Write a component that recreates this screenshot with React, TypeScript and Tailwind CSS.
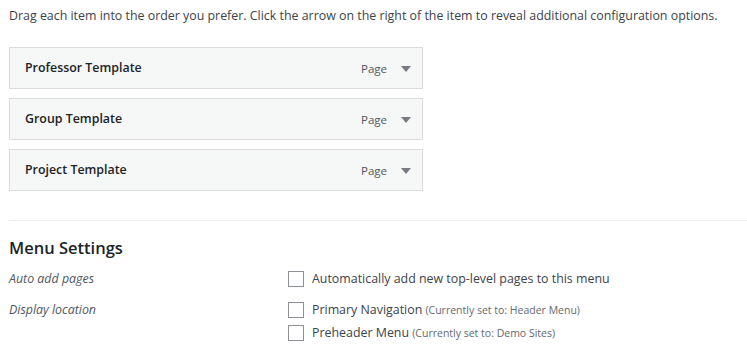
import React from "react";

const items = ["Professor Template", "Group Template", "Project Template"];

function Check() {
  return <span className="inline-block w-4 h-4 border border-[#8c8f94] bg-white shrink-0" />;
}

export default function App() {
  return (
    <div className="w-[747px] h-[349px] bg-white text-[#3c434a] text-[12.4px] font-['Segoe_UI','Open_Sans',sans-serif] overflow-hidden">
      <div className="pl-[9px]">
        <p className="pt-[6px] leading-[19px] whitespace-nowrap">Drag each item into the order you prefer. Click the arrow on the right of the item to reveal additional configuration options.</p>
        <div className="mt-[22px] flex flex-col gap-[9px] w-[414px]">
          {items.map((t) => (
            <div key={t} className="h-[42px] border border-[#dcdcde] bg-[#f6f7f7] flex items-center pl-[15px] pr-[11px] pt-[1px]">
              <span className="font-semibold text-[#1d2327] flex-1">{t}</span>
              <span className="text-[#50575e] text-[11.5px]">Page</span>
              <svg width="10" height="6" viewBox="0 0 10 6" className="ml-[14px]"><path d="M0 0h10L5 6z" fill="#787c82" /></svg>
            </div>
          ))}
        </div>
        <div className="mt-[29px] border-t border-[#f0f0f1]" />
        <h3 className="mt-[16px] text-[16.5px] font-semibold text-[#1d2327] leading-[22px]">Menu Settings</h3>
        <div className="mt-[10px] flex">
          <div className="w-[279px] italic text-[#50575e] leading-[20px]">Auto add pages</div>
          <div className="flex items-center gap-2">
            <Check />
            <span className="leading-[20px] whitespace-nowrap">Automatically add new top-level pages to this menu</span>
          </div>
        </div>
        <div className="mt-[11px] flex">
          <div className="w-[279px] italic text-[#50575e] leading-[20px]">Display location</div>
          <div className="flex flex-col gap-[3px]">
            <div className="flex items-center gap-2">
              <Check />
              <span className="leading-[20px] whitespace-nowrap">Primary Navigation <span className="text-[10.5px] text-[#646970]">(Currently set to: Header Menu)</span></span>
            </div>
            <div className="flex items-center gap-2">
              <Check />
              <span className="leading-[20px] whitespace-nowrap">Preheader Menu <span className="text-[10.5px] text-[#646970]">(Currently set to: Demo Sites)</span></span>
            </div>
          </div>
        </div>
      </div>
    </div>
  );
}
